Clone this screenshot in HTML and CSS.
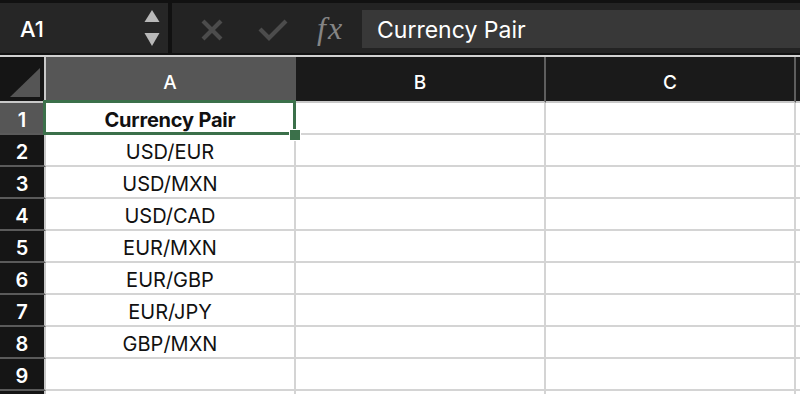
FILE: index.html
```html
<!DOCTYPE html>
<html>
<head>
<meta charset="utf-8">
<link rel="stylesheet" href="styles.css">
</head>
<body>
<div class="topbar">
  <div class="namebox">
    <span class="ref">A1</span>
    <svg class="spin" width="16" height="38" viewBox="0 0 16 38">
      <polygon points="8,0 15.5,12 0.5,12" fill="#b8b8b8"/>
      <polygon points="0.5,23 15.5,23 8,36" fill="#b8b8b8"/>
    </svg>
  </div>
  <div class="formulabar">
    <svg class="icon-x" width="24" height="24" viewBox="0 0 24 24">
      <path d="M3 3 L21 21 M21 3 L3 21" stroke="#4c4c4c" stroke-width="4.2" stroke-linecap="butt"/>
    </svg>
    <svg class="icon-check" width="30" height="22" viewBox="0 0 30 22">
      <path d="M2 10 L11 19 L28 2" stroke="#4c4c4c" stroke-width="4.2" fill="none" stroke-linejoin="miter"/>
    </svg>
    <span class="fx">fx</span>
    <div class="input">Currency Pair</div>
  </div>
</div>
<div class="divider"></div>
<div class="sheet">
  <div class="corner"><svg width="46" height="44" viewBox="0 0 46 44"><polygon points="10,40 40,11 40,40" fill="#555"/></svg></div>
  <div class="colhead sel">A</div>
  <div class="colhead">B</div>
  <div class="colhead">C</div>
  <div class="colhead end"></div>

  <div class="rowhead sel">1</div>
  <div class="cell bold a1">Currency Pair<div class="selbox"></div><div class="handle"></div></div>
  <div class="cell"></div><div class="cell"></div><div class="cell end"></div>

  <div class="rowhead">2</div><div class="cell">USD/EUR</div><div class="cell"></div><div class="cell"></div><div class="cell end"></div>
  <div class="rowhead">3</div><div class="cell">USD/MXN</div><div class="cell"></div><div class="cell"></div><div class="cell end"></div>
  <div class="rowhead">4</div><div class="cell">USD/CAD</div><div class="cell"></div><div class="cell"></div><div class="cell end"></div>
  <div class="rowhead">5</div><div class="cell">EUR/MXN</div><div class="cell"></div><div class="cell"></div><div class="cell end"></div>
  <div class="rowhead">6</div><div class="cell">EUR/GBP</div><div class="cell"></div><div class="cell"></div><div class="cell end"></div>
  <div class="rowhead">7</div><div class="cell">EUR/JPY</div><div class="cell"></div><div class="cell"></div><div class="cell end"></div>
  <div class="rowhead">8</div><div class="cell">GBP/MXN</div><div class="cell"></div><div class="cell"></div><div class="cell end"></div>
  <div class="rowhead">9</div><div class="cell"></div><div class="cell"></div><div class="cell"></div><div class="cell end"></div>
  <div class="rowhead short"></div><div class="cell short"></div><div class="cell short"></div><div class="cell short"></div><div class="cell short end"></div>
</div>
</body>
</html>
```
FILE: styles.css
```css
* { box-sizing: border-box; }
html, body {
  margin: 0;
  padding: 0;
  width: 800px;
  height: 394px;
  overflow: hidden;
  background: #111;
  font-family: Inter, "Liberation Sans", sans-serif;
}
.topbar {
  height: 55px;
  padding: 3px 0 2px 0;
  display: flex;
  gap: 4px;
  background: #111;
}
.namebox {
  width: 168px;
  background: #262626;
  display: flex;
  align-items: center;
  justify-content: space-between;
  padding: 0 8px 0 20px;
}
.ref {
  color: #fff;
  font-size: 22px;
  font-weight: 500;
  padding-top: 1px;
}
.spin { margin-top: 2px; }
.formulabar {
  flex: 1;
  background: #232323;
  display: flex;
  align-items: center;
  padding-left: 28px;
}
.icon-x { margin-top: 4px; }
.icon-check { margin-left: 34px; margin-top: 3px; }
.fx {
  font-family: "Liberation Serif", "DejaVu Serif", serif;
  font-style: italic;
  font-size: 32px;
  color: #858585;
  margin-left: 29px;
  margin-top: 1px;
  letter-spacing: 2px;
}
.input {
  margin-left: auto;
  align-self: flex-start;
  margin-top: 7px;
  width: 438px;
  height: 38px;
  background: #383838;
  color: #fff;
  font-size: 23px;
  display: flex;
  align-items: center;
  padding-left: 15px;
  padding-top: 1px;
}
.divider {
  height: 2px;
  background: #d0d0d0;
}
.sheet {
  display: grid;
  grid-template-columns: 46px 250px 250px 250px 4px;
  grid-template-rows: 46px repeat(9, 32px) 3px;
  background: #fff;
}
.corner {
  background: #151515;
  border-right: 2px solid #c8c8c8;
  border-bottom: 2px solid #c8c8c8;
}
.corner svg { display: block; }
.colhead {
  background: #1a1a1a;
  border-right: 2px solid #5e5e5e;
  border-bottom: 2px solid #c8c8c8;
  color: #fff;
  font-size: 19px;
  font-weight: 500;
  display: flex;
  align-items: center;
  justify-content: center;
  padding-top: 6px;
}
.colhead.sel {
  background: #565656;
  border-right-color: #565656;
}
.colhead.end { border-right: none; }
.rowhead {
  background: #151515;
  border-right: 2px solid #c8c8c8;
  border-bottom: 2px solid #5a5a5a;
  color: #fff;
  font-size: 20px;
  font-weight: 600;
  display: flex;
  align-items: center;
  justify-content: center;
  padding-top: 4px;
}
.rowhead.sel { background: #565656; }
.cell {
  background: #fff;
  border-right: 2px solid #d4d4d4;
  border-bottom: 2px solid #d4d4d4;
  color: #111;
  font-size: 20px;
  display: flex;
  align-items: center;
  justify-content: center;
  padding-top: 4px;
}
.cell.end { border-right: none; }
.short { padding: 0; border-bottom: none; }
.cell.bold { font-weight: 700; letter-spacing: -0.2px; }
.a1 { position: relative; }
.selbox {
  position: absolute;
  left: -3px;
  top: -3px;
  right: -2px;
  bottom: -2px;
  border: 3px solid #3b704a;
}
.handle {
  position: absolute;
  left: 243px;
  top: 26px;
  width: 12px;
  height: 12px;
  background: #3b704a;
  border: 1px solid #fff;
}
```
